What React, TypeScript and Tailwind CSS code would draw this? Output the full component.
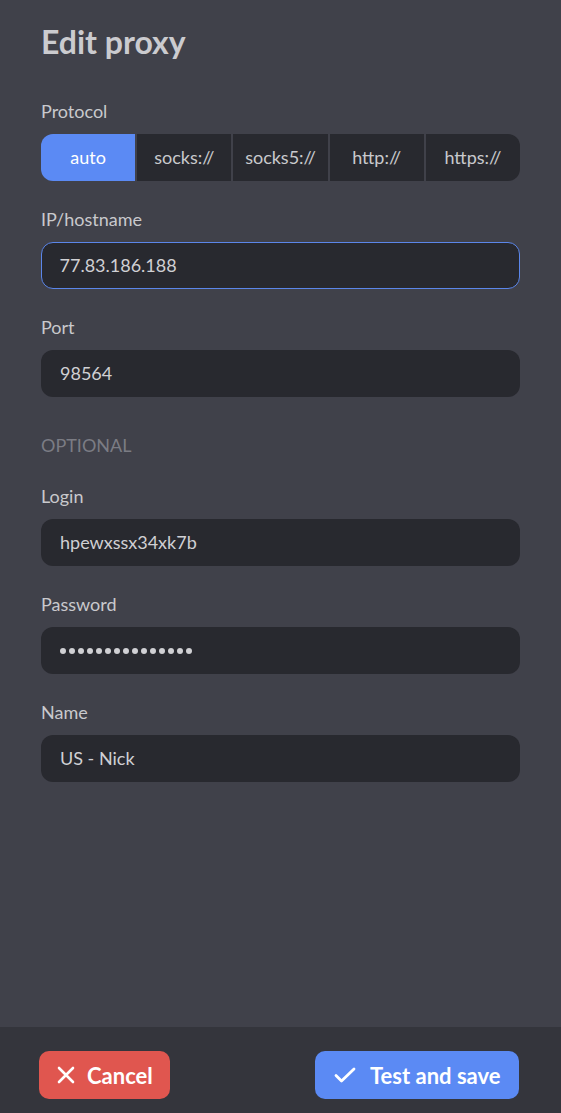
import React from "react";

const font = { fontFamily: "Lato, 'Open Sans', sans-serif" };

function Field({ label, children, first }: { label: string; children: React.ReactNode; first?: boolean }) {
  return (
    <div className={first ? "mt-[31px] flex flex-col" : "mt-[28px] flex flex-col"}>
      <div className="mb-[13px] text-[18px] leading-[20px] text-[#c9c9cd]">{label}</div>
      {children}
    </div>
  );
}

function Box({ children, focused }: { children: React.ReactNode; focused?: boolean }) {
  return (
    <div
      className={
        focused
          ? "flex h-[47px] items-center rounded-[12px] border-[1.5px] border-[#5b86ea] bg-[#28292f] pl-[17.5px] text-[18px] text-[#d0d0d4]"
          : "flex h-[47px] items-center rounded-[12px] bg-[#28292f] pl-[19px] text-[18px] text-[#d0d0d4]"
      }
    >
      {children}
    </div>
  );
}

export default function App() {
  const protocols = ["auto", "socks://", "socks5://", "http://", "https://"];
  return (
    <div className="flex h-[1113px] w-[561px] flex-col bg-[#40414a]" style={font}>
      <div className="flex flex-1 flex-col px-[41px] pt-[24px]">
        <h1 className="text-[32px] font-bold leading-[36px] text-[#cbcbcf]">Edit proxy</h1>

        <div className="mt-[41px] flex flex-col">
          <div className="mb-[13px] text-[18px] leading-[20px] text-[#c9c9cd]">Protocol</div>
          <div className="grid h-[47px] grid-cols-5 gap-[2px] overflow-hidden rounded-[12px]">
            {protocols.map((p, i) => (
              <div
                key={p}
                className={
                  i === 0
                    ? "flex items-center justify-center bg-[#5b8af4] text-[18px] text-white"
                    : "flex items-center justify-center bg-[#28292f] text-[18px] text-[#c9c9cd]"
                }
              >
                {p}
              </div>
            ))}
          </div>
        </div>

        <Field label="IP/hostname">
          <Box focused>77.83.186.188</Box>
        </Field>

        <Field label="Port">
          <Box>98564</Box>
        </Field>

        <div className="mt-[38px] text-[18px] leading-[20px] text-[#7b7c84]">OPTIONAL</div>

        <Field label="Login" first>
          <Box>hpewxssx34xk7b</Box>
        </Field>

        <Field label="Password">
          <Box>
            <div className="flex gap-[3px]">
              {Array.from({ length: 15 }).map((_, i) => (
                <div key={i} className="h-[6px] w-[6px] rounded-full bg-[#d0d0d4]" />
              ))}
            </div>
          </Box>
        </Field>

        <Field label="Name">
          <Box>US - Nick</Box>
        </Field>
      </div>

      <div className="flex h-[86px] items-start justify-between bg-[#34353c] pl-[39px] pr-[42px] pt-[24px]">
        <button className="flex h-[48px] w-[131px] items-center gap-[12px] rounded-[10px] bg-[#e0564f] pl-[18px] text-[22px] font-bold text-white">
          <svg width="18" height="18" viewBox="0 0 18 18" fill="none" stroke="white" strokeWidth="2.6" strokeLinecap="round">
            <path d="M2 2 L16 16 M16 2 L2 16" />
          </svg>
          Cancel
        </button>
        <button className="flex h-[48px] w-[204px] items-center gap-[14px] rounded-[10px] bg-[#5b8af4] pl-[19px] text-[22px] font-bold text-white">
          <svg width="22" height="16" viewBox="0 0 22 16" fill="none" stroke="white" strokeWidth="2.8" strokeLinecap="round" strokeLinejoin="round">
            <path d="M2 8.5 L7.5 14 L20 2" />
          </svg>
          Test and save
        </button>
      </div>
    </div>
  );
}
